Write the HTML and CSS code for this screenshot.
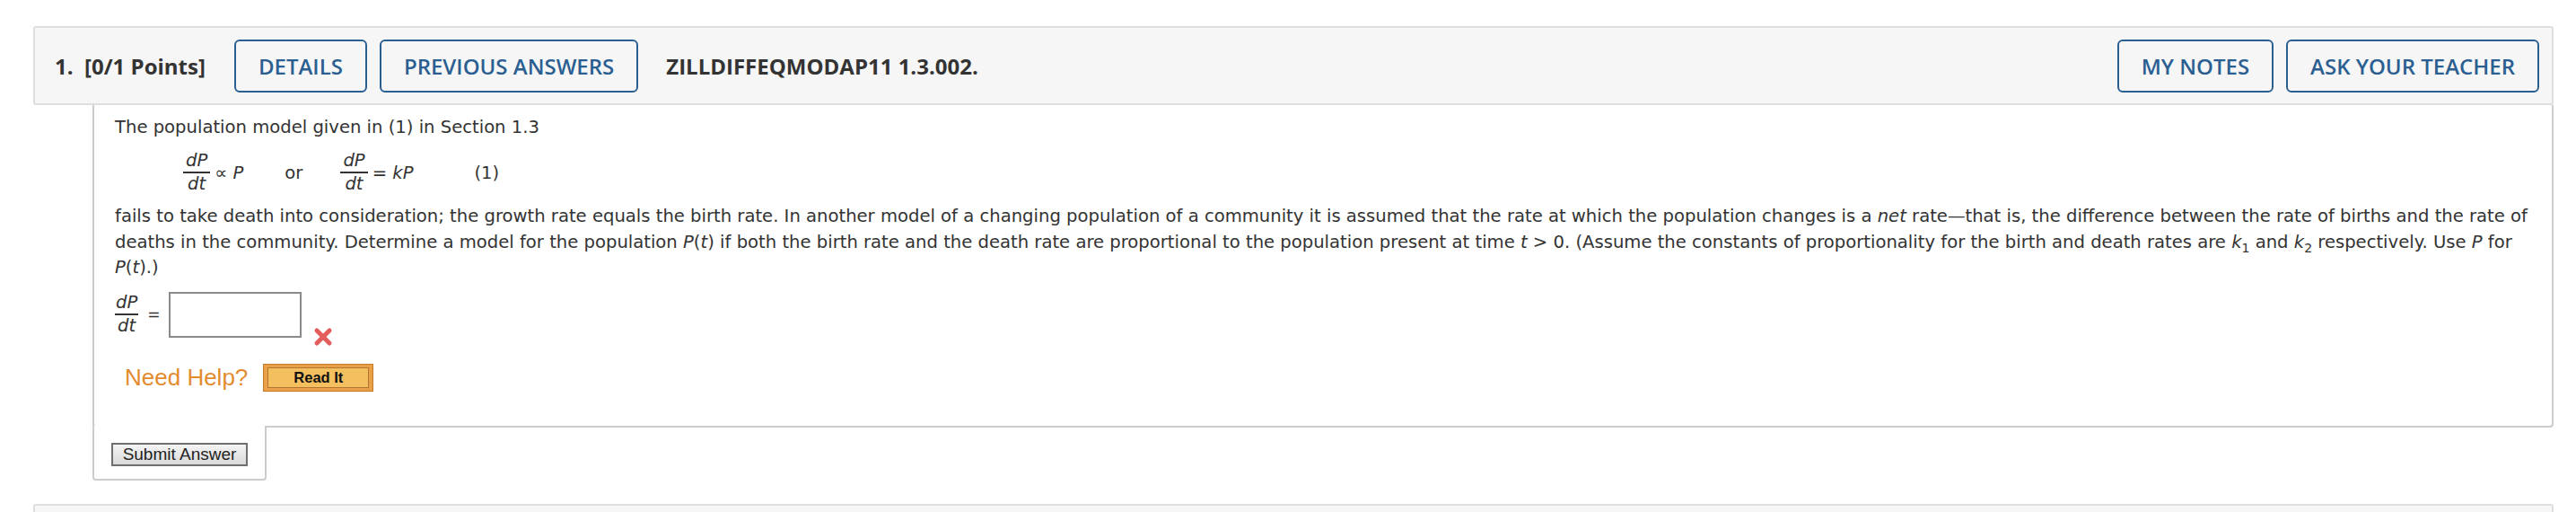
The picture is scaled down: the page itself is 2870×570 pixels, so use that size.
FILE: index.html
```html
<!DOCTYPE html>
<html lang="en">
<head>
<meta charset="utf-8">
<title>Question 1</title>
<link rel="stylesheet" href="styles.css">
</head>
<body>
<div class="page">
  <div class="q-header">
    <span class="q-num">1.&nbsp; [0/1 Points]</span>
    <span class="btn">DETAILS</span>
    <span class="btn">PREVIOUS ANSWERS</span>
    <span class="q-code">ZILLDIFFEQMODAP11 1.3.002.</span>
    <span class="spacer"></span>
    <span class="btn">MY NOTES</span>
    <span class="btn last">ASK YOUR TEACHER</span>
  </div>
  <div class="q-body">
    <p class="line">The population model given in (1) in Section 1.3</p>
    <div class="eq">
      <span class="frac"><span class="num"><i>dP</i></span><span class="den"><i>dt</i></span></span>
      <span class="rel">&prop; <i>P</i></span>
      <span class="or">or</span>
      <span class="frac"><span class="num"><i>dP</i></span><span class="den"><i>dt</i></span></span>
      <span class="rel">= <i>kP</i></span>
      <span class="eqno">(1)</span>
    </div>
    <p class="para">fails to take death into consideration; the growth rate equals the birth rate. In another model of a changing population of a community it is assumed that the rate at which the population changes is a <i>net</i> rate&mdash;that is, the difference between the rate of births and the rate of deaths in the community. Determine a model for the population <i>P</i>(<i>t</i>) if both the birth rate and the death rate are proportional to the population present at time <i>t</i> &gt; 0. (Assume the constants of proportionality for the birth and death rates are <i>k</i><sub>1</sub> and <i>k</i><sub>2</sub> respectively. Use <i>P</i> for <i>P</i>(<i>t</i>).)</p>
    <div class="answer">
      <span class="frac small"><span class="num"><i>dP</i></span><span class="den"><i>dt</i></span></span>
      <span class="eqsign">=</span>
      <span class="input"></span>
      <svg class="wrong" width="24" height="22" viewBox="0 0 24 22" aria-hidden="true">
        <path d="M5 4 L19 18 M19 4 L5 18" stroke="#e35d5d" stroke-width="5" stroke-linecap="round"/>
      </svg>
    </div>
    <div class="help">
      <span class="need">Need Help?</span>
      <span class="readit"><span class="readit-in">Read It</span></span>
    </div>
  </div>
  <div class="submit-tab">
    <span class="submit">Submit Answer</span>
  </div>
  <div class="next-header"></div>
</div>
</body>
</html>
```

FILE: styles.css
```css
* { box-sizing: border-box; }
html, body { margin: 0; padding: 0; background: #fff; }
body {
  font-family: "DejaVu Sans", Verdana, sans-serif;
  color: #333;
}
.page { padding: 29px 25px 0 37px; }

.q-header {
  display: flex;
  align-items: center;
  height: 88px;
  background: #f6f6f6;
  border: 2px solid #dedede;
  border-radius: 3px;
  padding: 0 14px 0 22px;
  font-family: "Open Sans", sans-serif;
  font-size: 24px;
}
.q-num { font-weight: 700; color: #333; margin-right: 32px; white-space: nowrap; }
.btn {
  height: 59px;
  display: flex;
  align-items: center;
  padding: 0 25px;
  border: 2px solid #2b5f91;
  border-radius: 6px;
  color: #2b5f91;
  font-weight: 600;
  margin-right: 14px;
  white-space: nowrap;
}
.btn.last { margin-right: 0; }
.q-code { font-weight: 700; color: #333; margin-left: 17px; }
.spacer { flex: 1; }

.q-body {
  margin-left: 66px;
  border: 2px solid #ccc;
  border-top: none;
  border-radius: 0 0 4px 4px;
  padding: 11px 20px 38px 23px;
  font-size: 19.6px;
}
.line { margin: 0; line-height: 28px; }
.eq {
  display: flex;
  align-items: center;
  margin: 12px 0 11px 76px;
}
.frac {
  display: inline-flex;
  flex-direction: column;
  align-items: center;
  line-height: 22px;
}
.frac .num { padding: 0 3px 1px; border-bottom: 2px solid #333; }
.frac .den { padding-top: 1px; }
.rel { margin-left: 5px; }
.or { margin: 0 42px 0 46px; }
.eqno { margin-left: 68px; }

.para { margin: 0; line-height: 28.5px; }
.para sub { font-size: 14px; line-height: 0; vertical-align: -5px; }

.answer {
  display: flex;
  align-items: center;
  margin-top: 12px;
}
.answer .frac .num { padding: 0 1px 1px; }
.eqsign { margin: 0 9px 0 10px; font-size: 17px; }
.input {
  width: 148px;
  height: 51px;
  border: 2px solid #8a8a8a;
  background: #fff;
}
.wrong { align-self: flex-end; margin: 0 0 -10px 12px; }

.help {
  display: flex;
  align-items: center;
  margin-top: 29px;
  margin-left: 11px;
}
.need {
  font-family: "Liberation Sans", Arial, sans-serif;
  font-size: 26px;
  color: #e38b2f;
}
.readit {
  margin-left: 17px;
  width: 123px;
  height: 31px;
  background: #e9a049;
  border: 1px solid #c47b28;
  padding: 3px 4px;
}
.readit-in {
  display: flex;
  align-items: center;
  justify-content: center;
  height: 100%;
  background: #f4bf5e;
  border: 1px solid #b27530;
  font-family: "Liberation Sans", Arial, sans-serif;
  font-weight: 700;
  font-size: 16.5px;
  color: #111;
}

.submit-tab {
  margin: -2px 0 0 66px;
  width: 194px;
  height: 61px;
  background: #fff;
  border: 2px solid #ccc;
  border-top: none;
  border-radius: 0 0 4px 4px;
  padding: 19px 0 0 19px;
}
.submit {
  display: flex;
  align-items: center;
  justify-content: center;
  width: 152px;
  height: 26px;
  border: 2px solid #6f6f6f;
  background: linear-gradient(#f4f4f4, #dadada);
  font-family: "Liberation Sans", Arial, sans-serif;
  font-size: 19px;
  color: #222;
}

.next-header {
  margin-top: 26px;
  height: 40px;
  background: #f6f6f6;
  border: 2px solid #dedede;
  border-radius: 3px;
}
```
